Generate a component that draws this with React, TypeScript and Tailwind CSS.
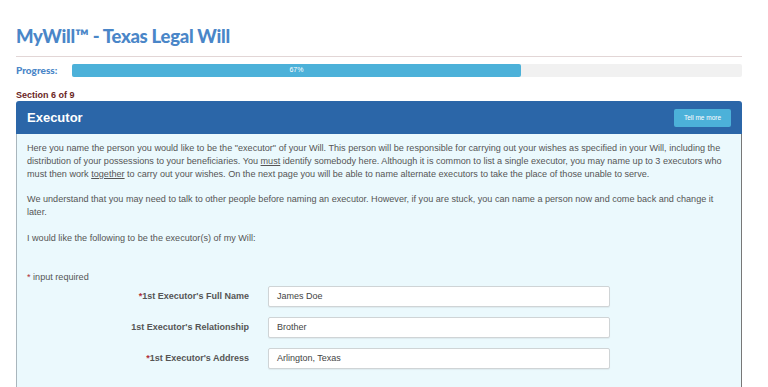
export default function App() {
  const rows = [
    { label: "1st Executor's Full Name", req: true, value: 'James Doe' },
    { label: "1st Executor's Relationship", req: false, value: 'Brother' },
    { label: "1st Executor's Address", req: true, value: 'Arlington, Texas' },
  ]
  return (
    <div className="h-[387px] w-[768px] overflow-hidden bg-white font-['Liberation_Sans',Arial,sans-serif]">
      <div className="pl-4 pr-[26px]">
        {/* Title */}
        <h1 className="pt-[24px] pb-[8px] font-['Lato',sans-serif] text-[18.5px] font-black leading-[24px] tracking-[-0.3px] text-[#4a86c8]">
          MyWill™ - Texas Legal Will
        </h1>
        <div className="h-px bg-[#e2d6d6]" />

        {/* Progress */}
        <div className="mt-[6px] flex items-center">
          <span className="w-[56px] font-['Lato',sans-serif] text-[10px] font-black text-[#4a86c8]">Progress:</span>
          <div className="flex h-[13px] flex-1 rounded-[2px] bg-[#f1f1f1]">
            <div className="flex h-full w-[67%] items-center justify-center rounded-[2px] bg-[#4cb1d9] text-[7px] text-white">
              67%
            </div>
          </div>
        </div>

        <div className="mt-[11px] text-[9px] font-bold leading-[12px] text-[#6a1f1f]">Section 6 of 9</div>

        {/* Panel */}
        <div className="rounded-t-[3px]">
          <div className="flex h-[33px] items-center justify-between rounded-t-[3px] bg-[#2b66a8] pl-[11px] pr-[11px]">
            <span className="text-[13px] font-bold text-white">Executor</span>
            <button className="h-[18px] w-[57px] rounded-[2px] bg-[#4cb1d9] text-[6.5px] text-white">Tell me more</button>
          </div>
          <div className="h-[270px] border-x border-x-[#a9b6bd] border-r-[#777] bg-[#ebf9fd] px-[10px] pt-[8px] text-[9.1px] leading-[13px] whitespace-nowrap text-[#555]">
            <p>
              Here you name the person you would like to be the "executor" of your Will. This person will be responsible for carrying out your wishes as specified in your Will, including the
              <br />
              distribution of your possessions to your beneficiaries. You <span className="underline">must</span> identify somebody here. Although it is common to list a single executor, you may name up to 3 executors who
              <br />
              must then work <span className="underline">together</span> to carry out your wishes. On the next page you will be able to name alternate executors to take the place of those unable to serve.
            </p>
            <p className="mt-[12px]">
              We understand that you may need to talk to other people before naming an executor. However, if you are stuck, you can name a person now and come back and change it
              <br />
              later.
            </p>
            <p className="mt-[13px]">I would like the following to be the executor(s) of my Will:</p>
            <p className="mt-[26px]">
              <span className="text-[#b0303a]">*</span> input required
            </p>
            <div className="mt-[2px] flex flex-col gap-[10px]">
              {rows.map((r) => (
                <div key={r.label} className="flex items-center">
                  <label className="w-[222px] text-right text-[9px] font-bold text-[#555]">
                    {r.req ? <span className="text-[#b0303a]">*</span> : null}
                    {r.label}
                  </label>
                  <div className="ml-[19px] flex h-[21px] w-[342px] items-center rounded-[2px] border border-[#cfd4d6] bg-white px-[8px] text-[9px] text-[#444] shadow-[0_1px_1px_rgba(0,0,0,0.06)]">
                    {r.value}
                  </div>
                </div>
              ))}
            </div>
          </div>
        </div>
      </div>
    </div>
  )
}
